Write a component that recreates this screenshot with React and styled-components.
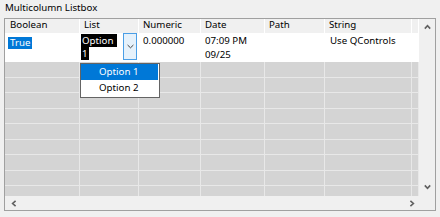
import React from 'react';
import styled, { createGlobalStyle } from 'styled-components';

const Global = createGlobalStyle`
  html, body { margin: 0; padding: 0; background: #f0f0f0; }
  body {
    font-family: "Noto Sans", "Open Sans", sans-serif;
    font-size: 9.7px;
    color: #000;
  }
  * { box-sizing: border-box; }
`;

const COLS = '75px 59px 62px 64px 60px 87px 7px';

const Page = styled.div`
  width: 440px;
  height: 217px;
  padding: 0 4px;
`;

const Title = styled.div`
  height: 18px;
  padding: 1px 0 0 1px;
  line-height: 13px;
  white-space: nowrap;
`;

const Frame = styled.div`
  width: 432px;
  height: 193px;
  border: 1px solid #a0a0a0;
  display: grid;
  grid-template-columns: 414px 16px;
  grid-template-rows: 177px 14px;
  background: #f0f0f0;
`;

const Viewport = styled.div`
  position: relative;
  overflow: hidden;
  background: #f0f0f0;
`;

const Row = styled.div`
  display: grid;
  grid-template-columns: ${COLS};
  height: ${p => p.$h}px;
`;

const HeadCell = styled.div`
  background: #f0f0f0;
  border-right: 1px solid #ffffff;
  line-height: 12px;
  padding-left: ${p => p.$pl ?? 4}px;
  white-space: nowrap;
  overflow: hidden;
`;

const DataCell = styled.div`
  background: #ffffff;
  line-height: 13.5px;
  padding: ${p => p.$pt ?? 1}px 0 0 ${p => p.$pl ?? 4}px;
  white-space: nowrap;
  overflow: hidden;
  position: relative;
`;

const EmptyCell = styled.div`
  background: #d4d4d4;
  border-right: 1px solid #e8e8e8;
  border-bottom: 1px solid #e8e8e8;
`;

const Highlight = styled.span`
  display: inline-block;
  background: #0078d7;
  color: #fff;
  line-height: 12px;
  height: 12px;
  padding: 0 2px;
`;

const Combo = styled.div`
  display: flex;
  width: 57px;
  height: 27px;
`;

const ComboText = styled.div`
  flex: 1;
  padding: 1px 0 0 1px;
  display: flex;
  flex-direction: column;
  align-items: flex-start;
`;

const Sel = styled.span`
  background: #000;
  color: #fff;
  line-height: 13px;
  height: 13px;
  padding: 0 1px;
  white-space: pre;
`;

const DropButton = styled.div`
  width: 14px;
  background: #e5f1fb;
  border: 1px solid #4a9ee6;
  display: flex;
  align-items: center;
  justify-content: center;
`;

const Popup = styled.div`
  position: absolute;
  left: 75px;
  top: 44px;
  width: 80px;
  background: #fff;
  border: 1px solid #646464;
  padding: 0 1px 1px 0;
`;

const Option = styled.div`
  height: 16px;
  line-height: 16px;
  padding-left: 18px;
  background: ${p => (p.$active ? '#0078d7' : 'transparent')};
  color: ${p => (p.$active ? '#fff' : '#000')};
  white-space: nowrap;
`;

const VScroll = styled.div`
  background: #f0f0f0;
  display: flex;
  flex-direction: column;
  justify-content: space-between;
  align-items: center;
  padding: 5px 0 6px;
`;

const HScroll = styled.div`
  background: #f0f0f0;
  display: flex;
  justify-content: space-between;
  align-items: center;
  padding: 0 4px 0 6px;
`;

const Corner = styled.div`
  background: #f0f0f0;
`;

const Chevron = ({ dir, size = 7, color = '#606060', w = 1.6 }) => {
  const paths = {
    up: 'M0.8 4.6 L3.5 1.6 L6.2 4.6',
    down: 'M0.8 1.4 L3.5 4.4 L6.2 1.4',
    left: 'M4.6 0.8 L1.6 3.5 L4.6 6.2',
    right: 'M1.4 0.8 L4.4 3.5 L1.4 6.2',
  };
  const vert = dir === 'up' || dir === 'down';
  return (
    <svg
      width={vert ? size : 6}
      height={vert ? 6 : size}
      viewBox={vert ? '0 0 7 6' : '0 0 6 7'}
      style={{ display: 'block' }}
    >
      <path d={paths[dir]} fill="none" stroke={color} strokeWidth={w} />
    </svg>
  );
};

const headers = ['Boolean', 'List', 'Numeric', 'Date', 'Path', 'String', ''];

export default function App() {
  const emptyRows = Array.from({ length: 9 });
  return (
    <>
      <Global />
      <Page>
        <Title>Multicolumn Listbox</Title>
        <Frame>
          <Viewport>
            <Row $h={14}>
              {headers.map((h, i) => (
                <HeadCell key={i} $pl={i === 0 ? 5 : 4}>
                  {h}
                </HeadCell>
              ))}
            </Row>
            <Row $h={29}>
              <DataCell $pl={3} $pt={3}>
                <Highlight>True</Highlight>
              </DataCell>
              <DataCell $pl={0} $pt={0}>
                <Combo>
                  <ComboText>
                    <Sel>{'Option '}</Sel>
                    <Sel>1</Sel>
                  </ComboText>
                  <DropButton>
                    <svg width="7" height="5" viewBox="0 0 7 5" style={{ display: 'block' }}>
                      <path d="M0.6 1 L3.5 3.8 L6.4 1" fill="none" stroke="#404040" strokeWidth="1" />
                    </svg>
                  </DropButton>
                </Combo>
              </DataCell>
              <DataCell>0.000000</DataCell>
              <DataCell>
                07:09 PM
                <br />
                09/25
              </DataCell>
              <DataCell />
              <DataCell $pl={5}>Use QControls</DataCell>
              <DataCell />
            </Row>
            {emptyRows.map((_, r) => (
              <Row key={r} $h={15.5}>
                {headers.map((_, c) => (
                  <EmptyCell key={c} />
                ))}
              </Row>
            ))}
            <Popup>
              <Option $active>Option 1</Option>
              <Option>Option 2</Option>
            </Popup>
          </Viewport>
          <VScroll>
            <Chevron dir="up" />
            <Chevron dir="down" />
          </VScroll>
          <HScroll>
            <Chevron dir="left" />
            <Chevron dir="right" />
          </HScroll>
          <Corner />
        </Frame>
      </Page>
    </>
  );
}
